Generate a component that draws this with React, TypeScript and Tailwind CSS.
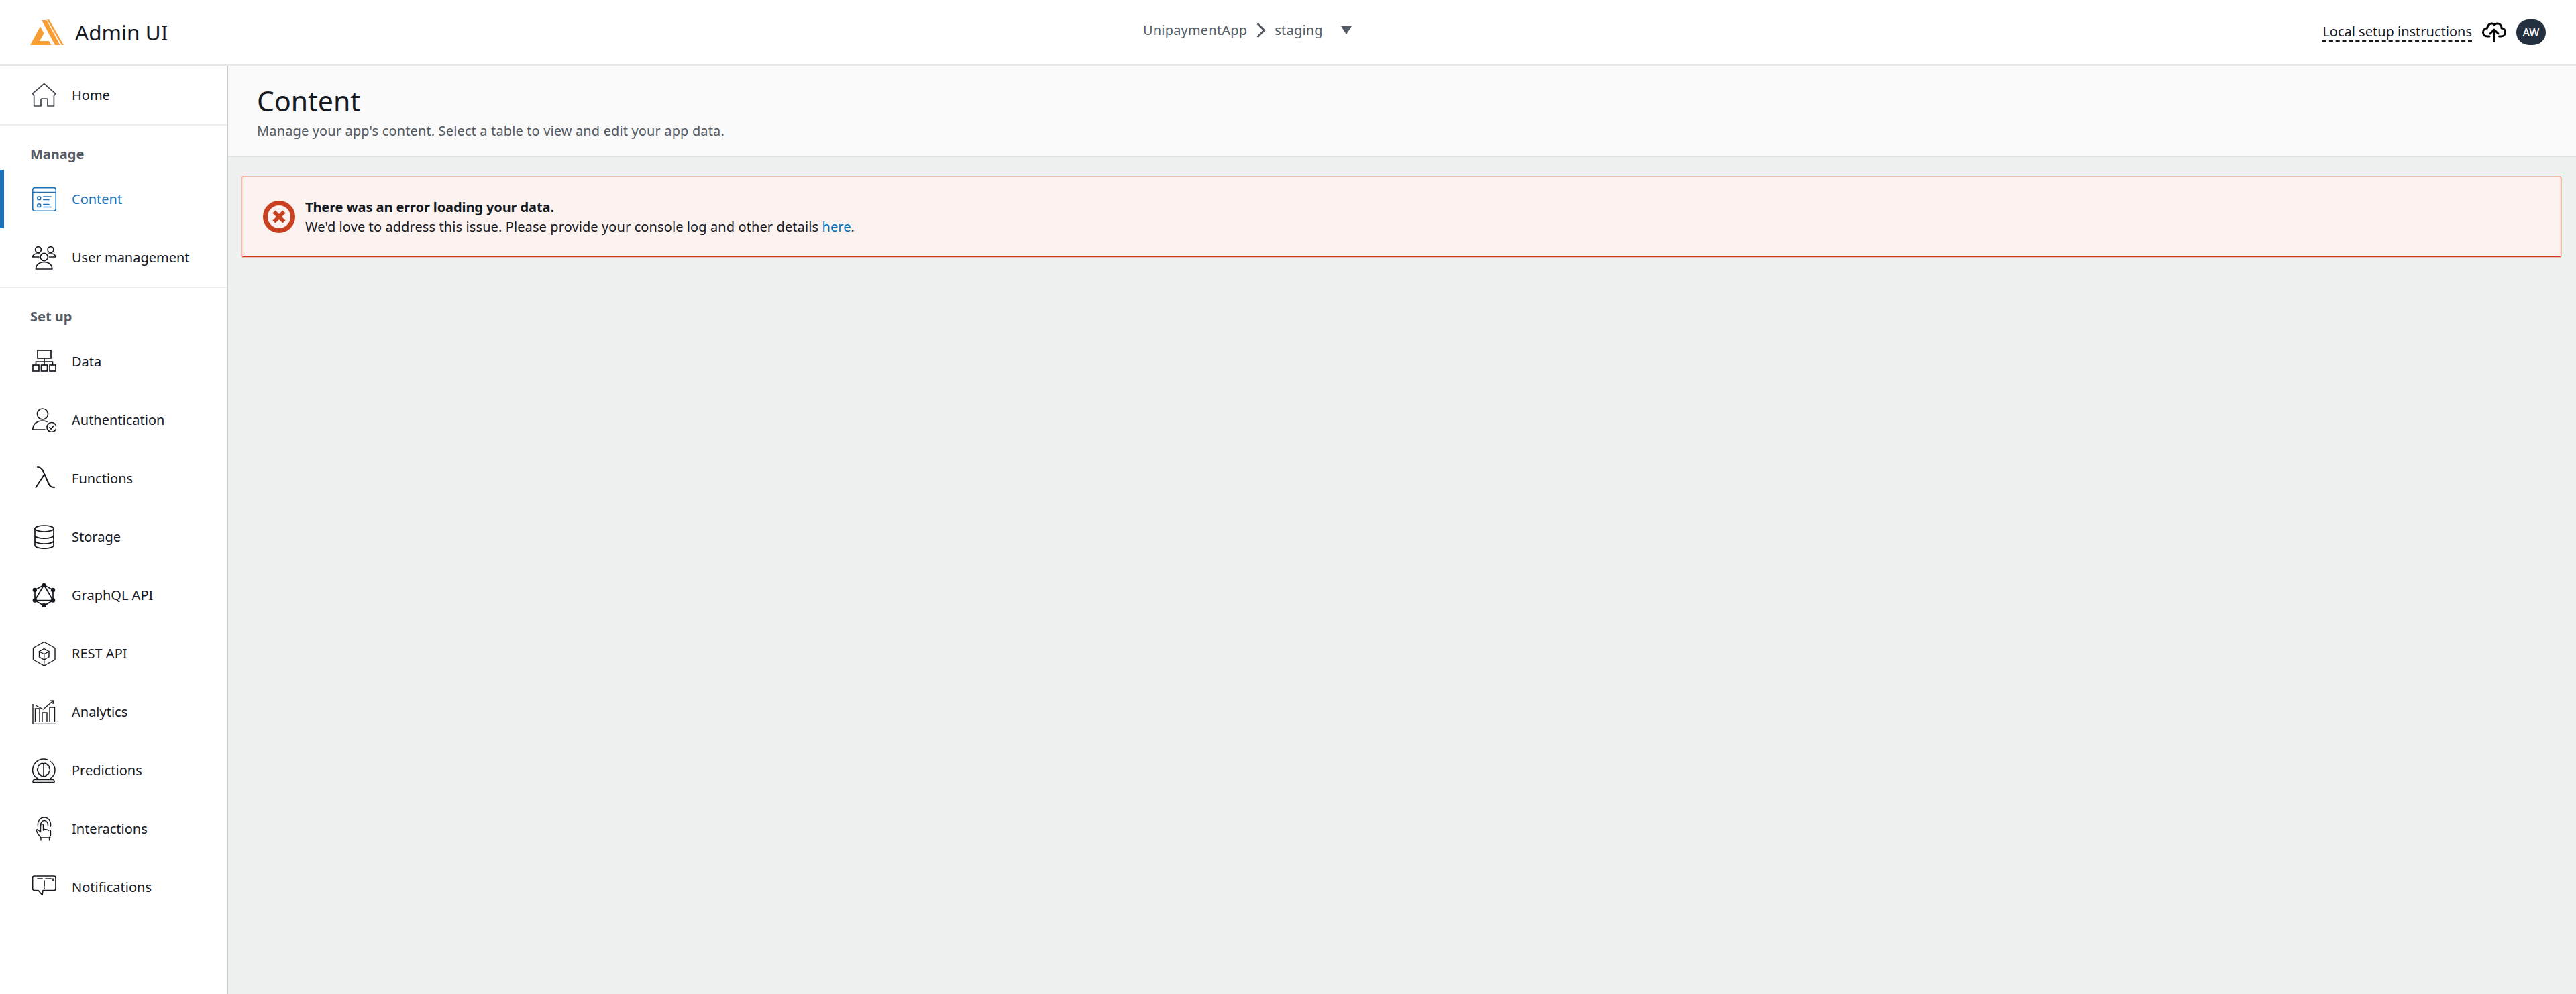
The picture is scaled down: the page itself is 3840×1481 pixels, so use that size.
import React from 'react';

const Svg = ({ children, className = '', strokeWidth = '1.7', strokeLinecap = 'round', strokeLinejoin = 'round' }: { children: React.ReactNode; className?: string; strokeWidth?: string; strokeLinecap?: 'round' | 'butt'; strokeLinejoin?: 'round' | 'miter' }) => (
  <svg viewBox="0 0 36 36" fill="none" stroke="currentColor" strokeWidth={strokeWidth} strokeLinecap={strokeLinecap} strokeLinejoin={strokeLinejoin} className={`w-9 h-9 shrink-0 ${className}`}>
    {children}
  </svg>
);

const HomeIcon = () => (
  <Svg className="text-[#414750]">
    <path d="M2.700 34V18.700L.6 15.400 17.700.6 34.600 15.400 32.400 18.700V34H23V24.500a1.500 1.500 0 0 0-1.500-1.500h-7a1.500 1.500 0 0 0-1.500 1.500V34Z" />
  </Svg>
);

const ContentIcon = () => (
  <Svg>
    <rect x="0.7" y="0.7" width="34.600" height="34.600" rx="3" />
    <path d="M.7 7.500h34.600M17 14h11M17 18.500h8M17 25.500h8M17 29.500h11" />
    <rect x="8" y="14" width="4.600" height="4.400" rx="1" />
    <rect x="8" y="25" width="4.600" height="4.400" rx="1" />
  </Svg>
);

const UsersIcon = () => (
  <Svg>
    <circle cx="9" cy="6" r="4.400" />
    <circle cx="27.500" cy="6" r="4.400" />
    <circle cx="17.700" cy="17" r="5.600" />
    <path d="M.5 17c.6-3.500 3.500-5 7-5h4M35 17c-.6-3.500-3.500-5-7-5h-3.500M.5 17H10M35 17h-9.500" />
    <path d="M5.500 35c0-6.500 5-10.500 12.200-10.500S29.800 28.500 29.800 35Z" />
  </Svg>
);

const DataIcon = () => (
  <Svg strokeLinecap="butt" strokeLinejoin="miter">
    <rect x="8" y="1" width="20" height="12" />
    <rect x="1" y="23" width="9" height="9" />
    <rect x="13.500" y="23" width="9" height="9" />
    <rect x="26" y="23" width="9" height="9" />
    <path d="M18 13v10M5.500 23v-5h25v5" />
  </Svg>
);

const AuthIcon = () => (
  <Svg>
    <circle cx="15.500" cy="9" r="8" />
    <path d="M19 32H.7c0-7.500 5.500-13 14.800-13 2.500 0 4.500.4 6.500 1.200" />
    <circle cx="29" cy="28.500" r="7" />
    <path d="M25.800 28.800l2.300 2.300 4-4.800" />
  </Svg>
);

const LambdaIcon = () => (
  <Svg strokeWidth="2">
    <path d="M8 1c5 0 7 3 9 7.500l8 18c1.300 3 3.500 4.500 8 4.500M17 13.500 5.500 31" />
  </Svg>
);

const StorageIcon = () => (
  <Svg>
    <ellipse cx="18" cy="5.500" rx="14" ry="4.500" />
    <path d="M4 5.500v25c0 2.800 6.500 4.700 14 4.700s14-1.900 14-4.700v-25M4 15.500c0 2.800 6.500 4.700 14 4.700s14-1.900 14-4.700M4 23.500c0 2.800 6.500 4.700 14 4.700s14-1.900 14-4.700" />
  </Svg>
);

const GraphqlIcon = () => (
  <Svg>
    <path d="M17.500 2.500 31 10v15.500L17.500 33.500 4 25.500V10ZM17.500 2.500 31 25.500H4Z" />
    <g fill="currentColor" stroke="none">
      <circle cx="17.500" cy="3" r="3.200" />
      <circle cx="3.800" cy="10" r="3.200" />
      <circle cx="31" cy="10" r="3.200" />
      <circle cx="3.800" cy="25.500" r="3.200" />
      <circle cx="31" cy="25.500" r="3.200" />
      <circle cx="17.500" cy="33" r="3.200" />
    </g>
  </Svg>
);

const RestIcon = () => (
  <Svg strokeWidth="1.400">
    <path d="M17.700.5 34 9.500v17.500L17.700 36 1.500 27V9.500Z" />
    <path d="M17.700 10.500 25 14.700v8.300l-7.300 4.200L10.500 23v-8.300Z" />
    <path d="M10.500 14.700l7.200 4.200 7.300-4.200M17.700 18.900v8.300M17.700 27.200V36" />
  </Svg>
);

const AnalyticsIcon = () => (
  <Svg strokeLinecap="butt" strokeLinejoin="miter" strokeWidth="1.400">
    <path d="M1 6v29.500h35M4.500 32V13H11v19M15 32V19h7v13M26 32V11h7.500v21" />
    <path d="M5 8l11.500 6L31 1.500M26.500 1.300 31.500 1 31 6" />
  </Svg>
);

const PredictionsIcon = () => (
  <Svg strokeWidth="1.500">
    <path d="M9 30.500C3.500 27.500.6 22.800.6 17.500.6 8.500 8 1 17 1c2 0 3.800.3 5.500 1M27 4.500c4.300 3 7 7.800 7 13 0 5.300-3 10-7.500 13" />
    <path d="M17 7.500v19M17 8c-2-1.500-5-.5-5.500 1.800-2.500.2-3.500 2.800-2.500 4.500-2 1.500-2 4 0 5.500-.5 2 1 4 3 4 .5 2.500 3.500 3.500 5 2M17 8c2-1.500 5-.5 5.500 1.800 2.500.2 3.500 2.800 2.500 4.500 2 1.500 2 4 0 5.500.5 2-1 4-3 4-.5 2.500-3.500 3.500-5 2" />
    <path d="M5 31.500h25M1.500 35.500h31c1 0 1-4-2-4h-27c-3 0-3 4-2 4Z" />
  </Svg>
);

const InteractionsIcon = () => (
  <Svg strokeWidth="1.400">
    <path d="M8.500 14C7.500 6.500 12 1 18 1s10.500 5.500 9.500 13M12.500 13c-.5-4 2-7.500 5.500-7.500s6 3.500 5.500 7.500" />
    <path d="M13 35v-4l-4-5c-1-1.500-2.500-4-2.500-6 0-1.500 1.500-1.500 2.500-.5l3.500 3V12.500c0-2.500 4-2.500 4 0v7.500c0-2 4-2 4 0 0-1.500 3.500-1.500 3.500.5 0-1.500 3.500-1 3.500 1v6l-2 3.500V35M13 31h14" />
  </Svg>
);

const NotificationsIcon = () => (
  <Svg>
    <path d="M3 1h29.500c1.500 0 2.500 1 2.500 2.500V20c0 1.500-1 2.500-2.500 2.500H16l-1 7-6-7H3C1.500 22.500.6 21.500.6 20V3.500C.6 2 1.500 1 3 1Z" />
    <path d="M8 5h7M20 5h8M31 5v3M18 8v8M18 19v.5" />
  </Svg>
);

const manageItems = [
  { label: 'Content', icon: ContentIcon, active: true },
  { label: 'User management', icon: UsersIcon, active: false },
];

const setupItems = [
  { label: 'Data', icon: DataIcon },
  { label: 'Authentication', icon: AuthIcon },
  { label: 'Functions', icon: LambdaIcon },
  { label: 'Storage', icon: StorageIcon },
  { label: 'GraphQL API', icon: GraphqlIcon },
  { label: 'REST API', icon: RestIcon },
  { label: 'Analytics', icon: AnalyticsIcon },
  { label: 'Predictions', icon: PredictionsIcon },
  { label: 'Interactions', icon: InteractionsIcon },
  { label: 'Notifications', icon: NotificationsIcon },
];

const NavRow = ({ label, icon: Icon, active = false }: { label: string; icon: () => React.JSX.Element; active?: boolean }) => (
  <div className={`h-[87px] flex items-center gap-[23px] pl-[48px] text-[20px] ${active ? 'text-[#1d72b8] border-l-[6px] border-[#1d72b8] !pl-[42px]' : 'text-[#16191f]'}`}>
    <Icon />
    <span>{label}</span>
  </div>
);

const SectionTitle = ({ children }: { children: React.ReactNode }) => (
  <div className="h-[66px] flex items-end pb-[8px] pl-[45px] text-[20px] font-bold text-[#545b64]">{children}</div>
);

export default function App() {
  return (
    <div className="h-[1481px] flex flex-col bg-white overflow-hidden font-['Noto_Sans','Open_Sans',sans-serif]">
      <header className="h-[98px] shrink-0 border-b-2 border-[#e6e7e7] flex items-center justify-between pl-[45px] pr-[45px]">
        <div className="flex items-center gap-[17px]">
          <svg viewBox="0 0 50 38" className="w-[50px] h-[38px]" fill="#f79d33">
            <path d="M0 38 15 10.500l5.500 10L14 32h14l3.500 6Z" />
            <path d="M17 1h7.500l20 37H37Z" />
            <path d="M25 0h3l22 38h-3Z" />
          </svg>
          <span className="text-[31.5px] leading-none text-[#16191f]">Admin UI</span>
        </div>
        <div className="flex items-center text-[20px] text-[#545b64] ml-[6px] mb-[6px]">
          <span className="tracking-[0.2px]">UnipaymentApp</span>
          <svg viewBox="0 0 14 24" className="w-[14px] h-[24px] ml-[14px] mr-[13px]" fill="none" stroke="#545b64" strokeWidth="3">
            <path d="M1.500 2l10 10-10 10" />
          </svg>
          <span className="tracking-[0.2px]">staging</span>
          <span className="ml-[27px] w-0 h-0 border-x-[8px] border-x-transparent border-t-[12px] border-t-[#545b64]" />
        </div>
        <div className="flex items-center">
          <span className="text-[20px] text-[#16191f] border-b-2 border-dashed border-[#16191f] leading-[26px]">Local setup instructions</span>
          <svg viewBox="0 0 36 30" className="w-[36px] h-[30px] ml-[15px]" fill="none" stroke="#000" strokeWidth="3" strokeLinejoin="round" strokeLinecap="round">
            <path d="M11 21H8c-4 0-6.500-2.500-6.500-6S4 9 7.500 9C8.500 4.500 11.500 2 14.500 2c2 0 3.500.8 4 2 1-1.500 3-2 4.500-2 3.500 0 6 3 6 7 3.500 0 5.500 2.500 5.500 6s-2.500 6-6 6h-3" />
            <path d="M18 29V12M12 17l6-6 6 6" />
          </svg>
          <span className="ml-[15px] w-11 h-[38px] rounded-full bg-[#232f3e] text-white text-[16px] font-medium flex items-center justify-center">AW</span>
        </div>
      </header>

      <div className="flex-1 flex min-h-0">
        <aside className="w-[340px] shrink-0 border-r-2 border-[#c9cccc]">
          <div className="border-b-2 border-[#eeefef]">
            <NavRow label="Home" icon={HomeIcon} />
          </div>
          <div className="border-b-2 border-[#eeefef]">
            <SectionTitle>Manage</SectionTitle>
            {manageItems.map((item) => (
              <NavRow key={item.label} {...item} />
            ))}
          </div>
          <SectionTitle>Set up</SectionTitle>
          {setupItems.map((item) => (
            <NavRow key={item.label} {...item} />
          ))}
        </aside>

        <main className="flex-1 bg-[#eff1f1]">
          <div className="h-[136px] bg-[#fafafa] border-b-2 border-[#dcdddd] pl-[43px] pt-[25px]">
            <h1 className="text-[41px] leading-[54px] text-[#16191f]">Content</h1>
            <p className="text-[20px] leading-[28px] mt-[4px] text-[#545b64] tracking-[0.14px]">Manage your app's content. Select a table to view and edit your app data.</p>
          </div>
          <div className="mt-[29px] ml-[20px] mr-[22px] h-[120px] bg-[#fcf3f0] border border-[#d13212] shadow-[0_0_0_1px_#d1321240] rounded-[2px] flex items-center pl-[31px]">
            <svg viewBox="0 0 48 48" className="w-12 h-12 shrink-0" fill="none" stroke="#c7401f">
              <circle cx="24" cy="24" r="20.500" strokeWidth="7" />
              <path d="M16.500 16.500l15 15M31.500 16.500l-15 15" strokeWidth="6" />
            </svg>
            <div className="ml-[15px] text-[20px] leading-[29px] text-[#16191f]">
              <div className="font-bold tracking-[-0.1px]">There was an error loading your data.</div>
              <div className="tracking-[0.1px]">
                We'd love to address this issue. Please provide your console log and other details <span className="text-[#0073bb]">here</span>.
              </div>
            </div>
          </div>
        </main>
      </div>
    </div>
  );
}
